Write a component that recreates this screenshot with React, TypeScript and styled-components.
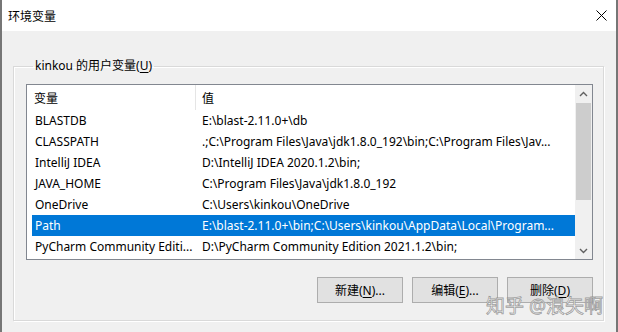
import React from "react";
import styled, { createGlobalStyle } from "styled-components";

const GlobalStyle = createGlobalStyle`
  html, body {
    margin: 0;
    padding: 0;
    background: #f0f0f0;
  }
  body {
    font-family: "Noto Sans", "Noto Sans CJK SC", sans-serif;
    font-size: 12px;
    color: #000;
  }
`;

const Window = styled.div`
  position: relative;
  width: 618px;
  height: 332px;
  box-sizing: border-box;
  border-left: 2px solid #767676;
  border-right: 2px solid #767676;
  background: #f0f0f0;
  overflow: hidden;
  display: flex;
  flex-direction: column;
`;

const TitleBar = styled.div`
  height: 31px;
  flex: none;
  background: #fff;
  display: flex;
  align-items: center;
  justify-content: space-between;
  padding: 0 9px 0 6px;
  font-size: 12px;
`;

const CloseBtn = styled.div`
  width: 12px;
  height: 12px;
  display: flex;
  align-items: center;
  justify-content: center;
`;

const Body = styled.div`
  flex: 1;
  padding: 27px 12px 0 11px;
`;

const Group = styled.fieldset`
  margin: 0;
  padding: 10px 10px 17px 12px;
  border: 1px solid #d9d9d9;
  box-shadow: 1px 1px 0 #fff, inset 1px 1px 0 #fff;
  min-width: 0;
`;

const Legend = styled.legend`
  margin-left: 7px;
  padding: 0 2px;
  line-height: 16px;
`;

const Underline = styled.span`
  text-decoration: underline;
  text-underline-offset: 2px;
`;

const ListView = styled.div`
  height: 176px;
  box-sizing: border-box;
  border: 1px solid #828790;
  background: #fff;
  display: flex;
`;

const ListContent = styled.div`
  flex: 1;
  min-width: 0;
  display: flex;
  flex-direction: column;
`;

const Header = styled.div`
  height: 25px;
  display: grid;
  grid-template-columns: 168px 1fr;
  align-items: center;
`;

const HeadCell = styled.div<{ $divider?: boolean }>`
  height: 100%;
  display: flex;
  align-items: center;
  padding-left: ${(p) => (p.$divider ? "6px" : "7px")};
  border-left: ${(p) => (p.$divider ? "1px solid #e5e5e5" : "none")};
`;

const Row = styled.div<{ $selected?: boolean }>`
  height: 21px;
  margin-left: 5px;
  display: grid;
  grid-template-columns: 163px 1fr;
  align-items: center;
  background: ${(p) => (p.$selected ? "#0078d7" : "transparent")};
  color: ${(p) => (p.$selected ? "#fff" : "#000")};
`;

const Cell = styled.div<{ $second?: boolean }>`
  padding-left: ${(p) => (p.$second ? "7px" : "3px")};
  white-space: nowrap;
  overflow: hidden;
`;

const ScrollBar = styled.div`
  width: 17px;
  flex: none;
  background: #f0f0f0;
  display: flex;
  flex-direction: column;
`;

const ArrowBtn = styled.div`
  height: 17px;
  display: flex;
  align-items: center;
  justify-content: center;
`;

const Track = styled.div`
  flex: 1;
  padding: 1px 1px 0 1px;
`;

const Thumb = styled.div`
  height: 97px;
  background: #cdcdcd;
`;

const ButtonRow = styled.div`
  display: flex;
  justify-content: flex-end;
  gap: 9px;
  margin-top: 17px;
`;

const Button = styled.button`
  width: 86px;
  height: 26px;
  box-sizing: border-box;
  border: 1px solid #adadad;
  background: #e1e1e1;
  font-family: inherit;
  font-size: 12px;
  color: #000;
  padding: 0;
`;

const Watermark = styled.div`
  position: absolute;
  left: 484px;
  top: 291px;
  font-size: 19px;
  color: rgba(255, 255, 255, 0.95);
  -webkit-text-stroke: 0.8px rgba(140, 140, 140, 0.85);
  white-space: nowrap;
  pointer-events: none;
`;

const rows: [string, string][] = [
  ["BLASTDB", "E:\\blast-2.11.0+\\db"],
  ["CLASSPATH", ".;C:\\Program Files\\Java\\jdk1.8.0_192\\bin;C:\\Program Files\\Jav..."],
  ["IntelliJ IDEA", "D:\\IntelliJ IDEA 2020.1.2\\bin;"],
  ["JAVA_HOME", "C:\\Program Files\\Java\\jdk1.8.0_192"],
  ["OneDrive", "C:\\Users\\kinkou\\OneDrive"],
  ["Path", "E:\\blast-2.11.0+\\bin;C:\\Users\\kinkou\\AppData\\Local\\Program..."],
  ["PyCharm Community Editi...", "D:\\PyCharm Community Edition 2021.1.2\\bin;"],
];

const Chevron = ({ up }: { up?: boolean }) => (
  <svg width="9" height="6" viewBox="0 0 9 6">
    <polyline
      points={up ? "1,5 4.5,1.5 8,5" : "1,1 4.5,4.5 8,1"}
      fill="none"
      stroke="#606060"
      strokeWidth="1.4"
    />
  </svg>
);

export default function App() {
  return (
    <>
      <GlobalStyle />
      <Window>
        <TitleBar>
          <span>环境变量</span>
          <CloseBtn>
            <svg width="11" height="11" viewBox="0 0 11 11">
              <line x1="0.5" y1="0.5" x2="10.5" y2="10.5" stroke="#000" strokeWidth="1" />
              <line x1="10.5" y1="0.5" x2="0.5" y2="10.5" stroke="#000" strokeWidth="1" />
            </svg>
          </CloseBtn>
        </TitleBar>
        <Body>
          <Group>
            <Legend>
              kinkou 的用户变量(<Underline>U</Underline>)
            </Legend>
            <ListView>
              <ListContent>
                <Header>
                  <HeadCell>变量</HeadCell>
                  <HeadCell $divider>值</HeadCell>
                </Header>
                {rows.map(([name, value]) => (
                  <Row key={name} $selected={name === "Path"}>
                    <Cell>{name}</Cell>
                    <Cell $second>{value}</Cell>
                  </Row>
                ))}
              </ListContent>
              <ScrollBar>
                <ArrowBtn>
                  <Chevron up />
                </ArrowBtn>
                <Track>
                  <Thumb />
                </Track>
                <ArrowBtn>
                  <Chevron />
                </ArrowBtn>
              </ScrollBar>
            </ListView>
            <ButtonRow>
              <Button>
                新建(<Underline>N</Underline>)...
              </Button>
              <Button>
                编辑(<Underline>E</Underline>)...
              </Button>
              <Button>
                删除(<Underline>D</Underline>)
              </Button>
            </ButtonRow>
          </Group>
        </Body>
        <Watermark>知乎 @浪矢啊</Watermark>
      </Window>
    </>
  );
}
